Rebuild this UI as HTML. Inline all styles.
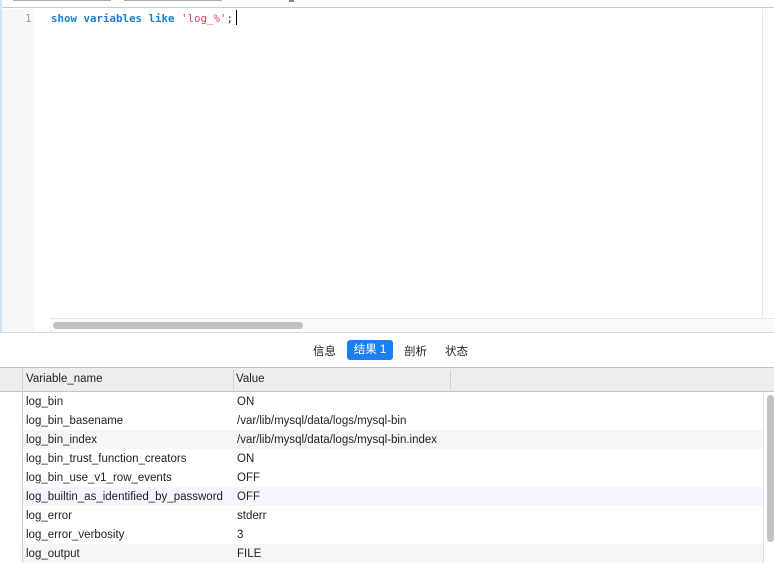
<!DOCTYPE html>
<html><head><meta charset="utf-8"><style>
body{margin:0;width:774px;height:563px;overflow:hidden;background:#fff;font-family:"Liberation Sans","Noto Sans CJK SC",sans-serif;position:relative}
div{position:absolute;box-sizing:border-box}
.code{font-family:"DejaVu Sans Mono","Liberation Mono",monospace;font-size:10.8px}
.r{left:0;width:766px;height:19px;font-size:11.5px;color:#222}
.r span{position:absolute;top:4px}
</style></head><body>
<div style="left:0;top:0;width:774px;height:8px;background:#fff;border-bottom:1px solid #c8c8c8"></div>
<div style="left:13px;top:0;width:98px;height:1px;background:#aaa"></div>
<div style="left:124px;top:0;width:98px;height:1px;background:#aaa"></div>
<div style="left:289px;top:0;width:5px;height:2px;background:#888"></div>
<div style="left:0;top:0;width:2px;height:333px;background:#cfe3f0"></div>
<div style="left:2px;top:9px;width:32px;height:324px;background:#f7f7f7"></div>
<div style="left:762px;top:9px;width:1px;height:310px;background:#e6e6e6"></div>
<div class="code" style="left:25px;top:12px;color:#999">1</div>
<div class="code" style="left:51px;top:12px;color:#1a7fd4;font-weight:bold;white-space:pre">show variables like <span style="color:#e0455f;font-weight:normal">'log_%'</span><span style="color:#333;font-weight:normal">;</span></div>
<div style="left:236px;top:10px;width:1px;height:15px;background:#000"></div>
<div style="left:50px;top:318px;width:724px;height:14px;background:#fafafa;border-top:1px solid #e8e8e8"></div>
<div style="left:53px;top:322px;width:250px;height:7px;border-radius:4px;background:#c0c0c0"></div>
<div style="left:0;top:332px;width:774px;height:1px;background:#d8d8d8"></div>
<div style="left:313px;top:343px;font-size:11.5px;color:#222">信息</div>
<div style="left:347px;top:340px;width:46px;height:20px;border-radius:3px;background:#1a7ff0;color:#fff;font-size:11.5px;text-align:center;line-height:20px">结果 1</div>
<div style="left:404px;top:343px;font-size:11.5px;color:#222">剖析</div>
<div style="left:445px;top:343px;font-size:11.5px;color:#222">状态</div>
<div style="left:0;top:367px;width:774px;height:25px;background:#eeeeee;border-top:1px solid #c4c4c4;border-bottom:1px solid #c4c4c4"></div>
<div style="left:22px;top:368px;width:1px;height:195px;background:#d0d0d0"></div>
<div style="left:233px;top:370px;width:1px;height:19px;background:#d0d0d0"></div>
<div style="left:450px;top:370px;width:1px;height:19px;background:#d0d0d0"></div>
<div style="left:26px;top:373px;font-size:11.5px;color:#222">Variable_name</div>
<div style="left:236px;top:373px;font-size:11.5px;color:#222">Value</div>
<div class="r" style="top:392px;left:23px"><span style="left:3px">log_bin</span><span style="left:214px">ON</span></div>
<div class="r" style="top:411px;left:23px"><span style="left:3px">log_bin_basename</span><span style="left:214px">/var/lib/mysql/data/logs/mysql-bin</span></div>
<div class="r" style="top:430px;left:23px;width:740px;background:#f6f6f6"><span style="left:3px">log_bin_index</span><span style="left:214px">/var/lib/mysql/data/logs/mysql-bin.index</span></div>
<div class="r" style="top:449px;left:23px"><span style="left:3px">log_bin_trust_function_creators</span><span style="left:214px">ON</span></div>
<div class="r" style="top:468px;left:23px"><span style="left:3px">log_bin_use_v1_row_events</span><span style="left:214px">OFF</span></div>
<div class="r" style="top:487px;left:23px;width:740px;background:#f2f7fd"><span style="left:3px">log_builtin_as_identified_by_password</span><span style="left:214px">OFF</span></div>
<div class="r" style="top:506px;left:23px"><span style="left:3px">log_error</span><span style="left:214px">stderr</span></div>
<div class="r" style="top:525px;left:23px"><span style="left:3px">log_error_verbosity</span><span style="left:214px">3</span></div>
<div class="r" style="top:544px;left:23px;width:740px;background:#f6f6f6"><span style="left:3px">log_output</span><span style="left:214px">FILE</span></div>
<div style="left:763px;top:392px;width:1px;height:171px;background:#e2e2e2"></div>
<div style="left:767px;top:395px;width:7px;height:147px;border-radius:4px;background:#c2c2c2"></div>
</body></html>
